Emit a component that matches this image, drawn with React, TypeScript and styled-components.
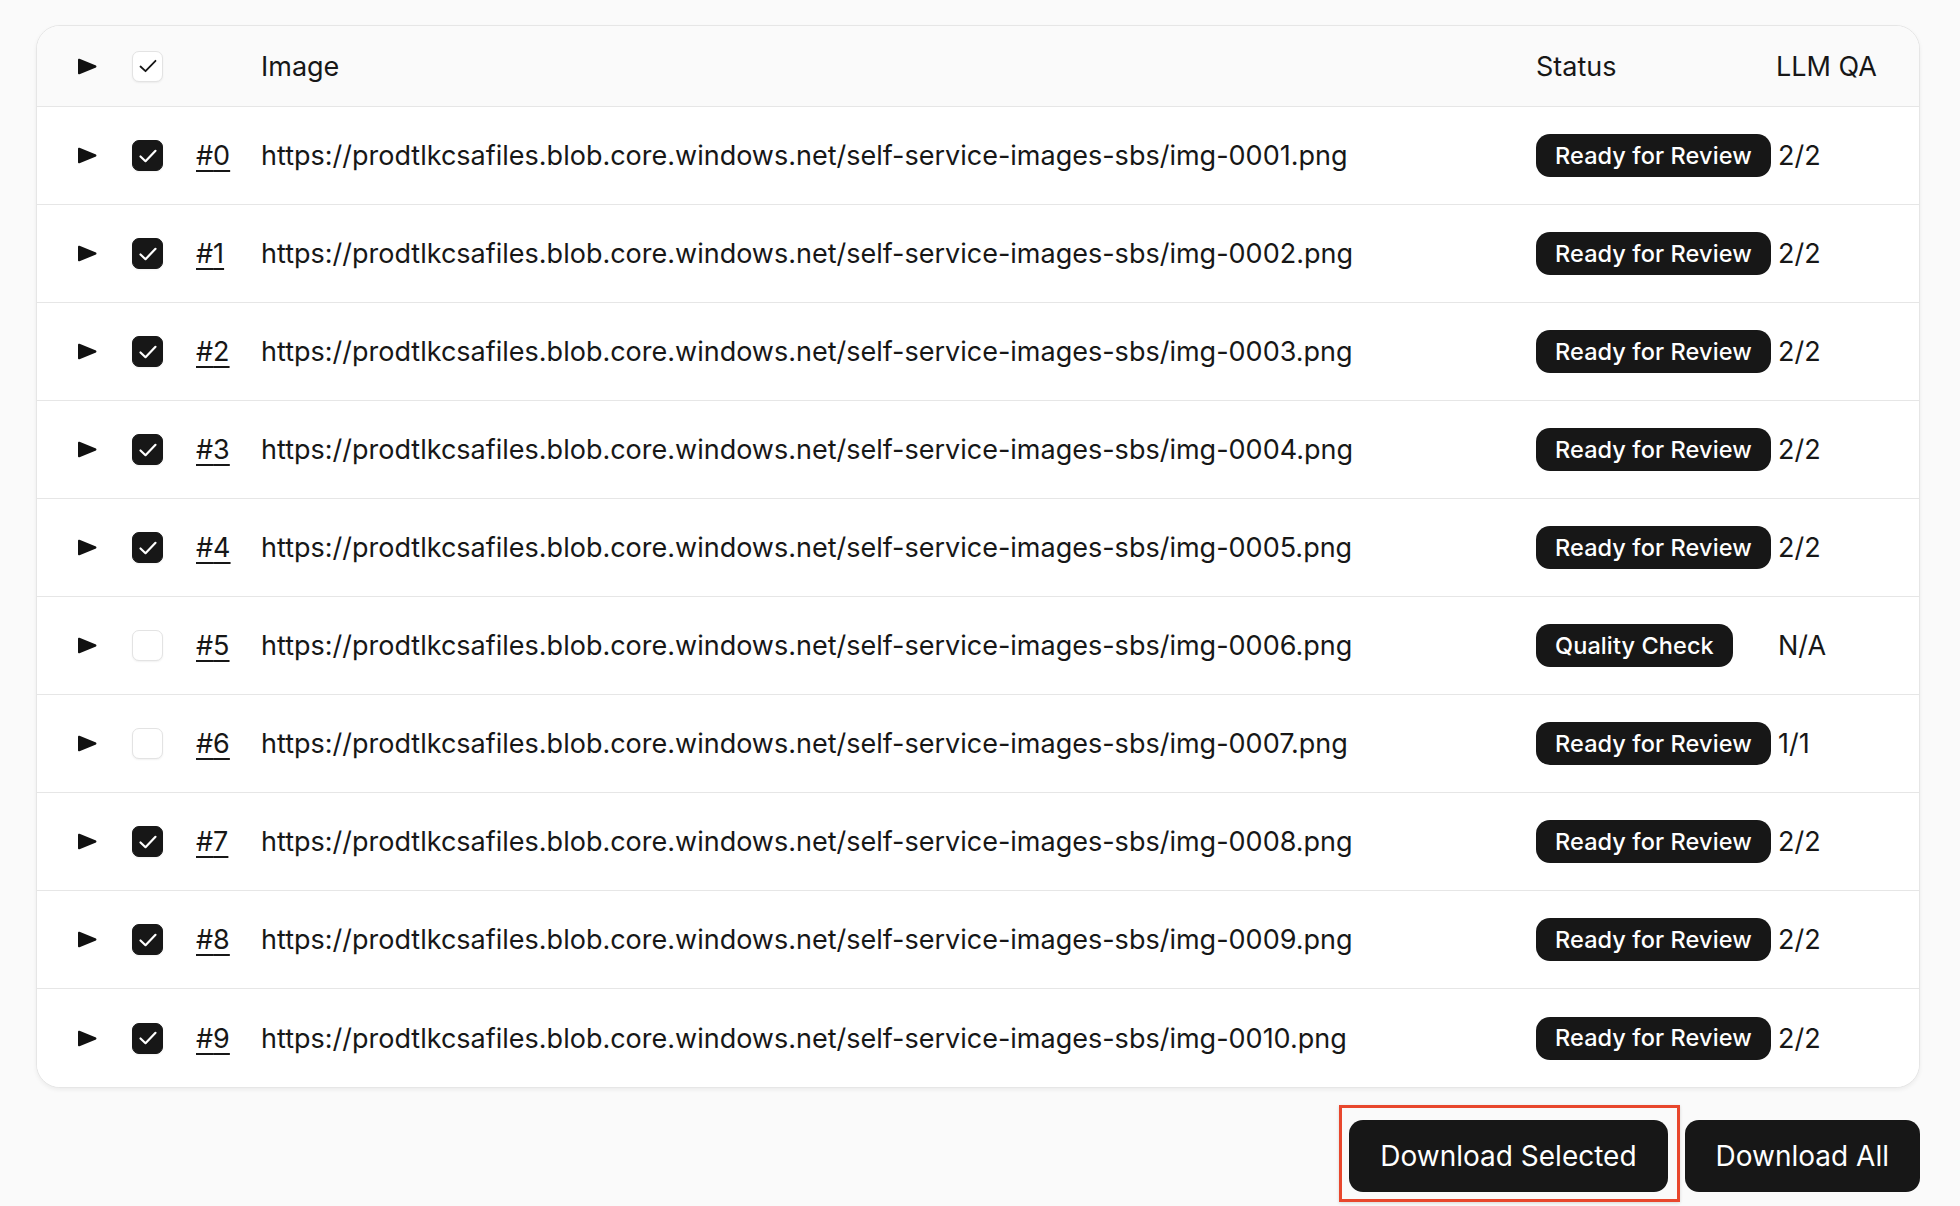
import React from 'react';
import styled, { createGlobalStyle } from 'styled-components';

const GlobalStyle = createGlobalStyle`
  html, body {
    margin: 0;
    padding: 0;
    background: #fafafa;
  }
  body {
    font-family: Inter, "Noto Sans", "Liberation Sans", sans-serif;
    color: #171717;
  }
  * {
    box-sizing: border-box;
  }
`;

const Page = styled.div`
  padding: 25px 40px 14px 36px;
  display: flex;
  flex-direction: column;
  gap: 32px;
`;

const Card = styled.div`
  background: #fff;
  border: 1px solid #e6e6e6;
  border-radius: 24px;
  overflow: hidden;
  box-shadow: 0 2px 4px rgba(0, 0, 0, 0.06);
`;

const Row = styled.div<{ $head?: boolean }>`
  display: grid;
  grid-template-columns: 54px 64px 65px 1fr 240px 143px;
  align-items: center;
  height: ${(p) => (p.$head ? '81px' : '98px')};
  padding-left: 41px;
  background: ${(p) => (p.$head ? '#fafafa' : '#fff')};
  border-bottom: 1px solid #e6e6e6;
  font-size: 27px;
  line-height: 1;

  &:last-child {
    border-bottom: none;
  }
`;

const Arrow = styled.svg`
  width: 19px;
  height: 17px;
  display: block;
`;

const Box = styled.div<{ $checked?: boolean; $head?: boolean }>`
  width: 31px;
  height: 31px;
  border-radius: 7px;
  display: flex;
  align-items: center;
  justify-content: center;
  background: ${(p) => (p.$checked && !p.$head ? '#171717' : '#fff')};
  border: 1px solid ${(p) => (p.$checked && !p.$head ? '#171717' : '#e3e3e3')};
  box-shadow: 0 1px 2px rgba(0, 0, 0, 0.06);
  color: ${(p) => (p.$head ? '#171717' : '#fff')};
`;

const IdLink = styled.a`
  color: #171717;
  text-decoration: underline;
  text-underline-offset: 5px;
  text-decoration-thickness: 2px;
`;

const Url = styled.span`
  white-space: nowrap;
`;

const Badge = styled.span`
  display: inline-flex;
  align-items: center;
  height: 43px;
  padding: 0 19px;
  border-radius: 14px;
  background: #171717;
  color: #fff;
  font-size: 23.5px;
  font-weight: 500;
  letter-spacing: 0.1px;
  justify-self: start;
`;

const Qa = styled.span`
  padding-left: 2px;
`;

const Actions = styled.div`
  display: flex;
  justify-content: flex-end;
  align-items: flex-start;
  gap: 17px;
`;

const Highlight = styled.div`
  border: 3px solid #e8472d;
  margin: -15px -12px -10px -10px;
  padding: 12px 9px 7px 7px;
  box-shadow: 0 1px 3px rgba(0, 0, 0, 0.15);
`;

const Button = styled.button`
  height: 72px;
  padding: 0 31px;
  border: none;
  border-radius: 14px;
  background: #171717;
  color: #fff;
  font-family: inherit;
  font-size: 28px;
  font-weight: 400;
  cursor: pointer;
  display: block;
`;

const Play = () => (
  <Arrow viewBox="0 0 19 17">
    <path d="M1.5 0.8 L18 7.6 Q19 8.5 18 9.4 L1.5 16.2 Q0 16.8 0 15.2 V1.8 Q0 0.2 1.5 0.8 Z" fill="#111" />
  </Arrow>
);

const Check = ({ head }: { head?: boolean }) => (
  <svg width="20" height="16" viewBox="0 0 20 16">
    <path
      d="M2.5 8.5 L7.5 13.2 L17.5 2.8"
      fill="none"
      stroke="currentColor"
      strokeWidth={head ? 1.8 : 2.2}
      strokeLinecap="round"
      strokeLinejoin="round"
    />
  </svg>
);

const rows = [
  { checked: true, status: 'Ready for Review', qa: '2/2' },
  { checked: true, status: 'Ready for Review', qa: '2/2' },
  { checked: true, status: 'Ready for Review', qa: '2/2' },
  { checked: true, status: 'Ready for Review', qa: '2/2' },
  { checked: true, status: 'Ready for Review', qa: '2/2' },
  { checked: false, status: 'Quality Check', qa: 'N/A' },
  { checked: false, status: 'Ready for Review', qa: '1/1' },
  { checked: true, status: 'Ready for Review', qa: '2/2' },
  { checked: true, status: 'Ready for Review', qa: '2/2' },
  { checked: true, status: 'Ready for Review', qa: '2/2' },
];

export default function App() {
  return (
    <>
      <GlobalStyle />
      <Page>
        <Card>
          <Row $head>
            <Play />
            <Box $head $checked>
              <Check head />
            </Box>
            <span />
            <span>Image</span>
            <span>Status</span>
            <span>LLM QA</span>
          </Row>
          {rows.map((r, i) => (
            <Row key={i}>
              <Play />
              <Box $checked={r.checked}>{r.checked && <Check />}</Box>
              <IdLink href="#">#{i}</IdLink>
              <Url>
                https://prodtlkcsafiles.blob.core.windows.net/self-service-images-sbs/img-
                {String(i + 1).padStart(4, '0')}.png
              </Url>
              <Badge>{r.status}</Badge>
              <Qa>{r.qa}</Qa>
            </Row>
          ))}
        </Card>
        <Actions>
          <Highlight>
            <Button>Download Selected</Button>
          </Highlight>
          <Button>Download All</Button>
        </Actions>
      </Page>
    </>
  );
}
